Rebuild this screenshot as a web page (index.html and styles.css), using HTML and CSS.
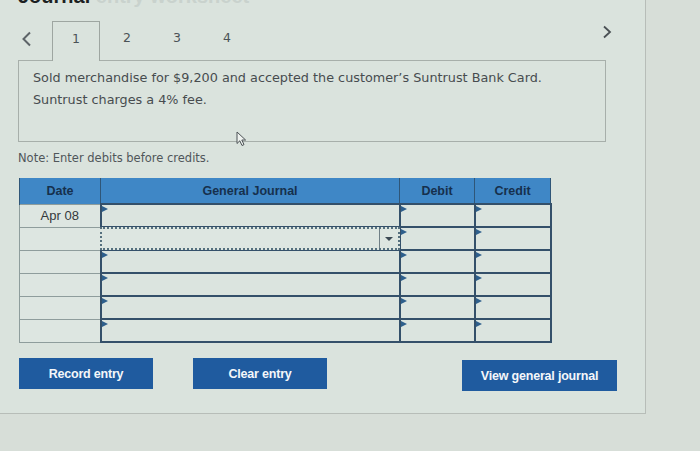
FILE: index.html
```html
<!DOCTYPE html>
<html>
<head>
<meta charset="utf-8">
<link rel="stylesheet" href="styles.css">
</head>
<body>
<div class="page">
  <div class="panel">
    <h1 class="title"><span class="t-strong">Journal</span> <span class="t-light">entry worksheet</span></h1>
    <div class="tabs">
      <span class="chev chev-left">
        <svg width="12" height="16" viewBox="0 0 12 16"><path d="M9 1.5 L2.5 8 L9 14.5" fill="none" stroke="#5d6468" stroke-width="2"/></svg>
      </span>
      <span class="tab active">1</span>
      <span class="tab">2</span>
      <span class="tab">3</span>
      <span class="tab">4</span>
      <span class="chev chev-right">
        <svg width="10" height="14" viewBox="0 0 10 14"><path d="M2 1.5 L8 7 L2 12.5" fill="none" stroke="#4a5054" stroke-width="1.8"/></svg>
      </span>
    </div>
    <div class="question">
      <p>Sold merchandise for $9,200 and accepted the customer’s Suntrust Bank Card.<br>Suntrust charges a 4% fee.</p>
    </div>
    <p class="note">Note: Enter debits before credits.</p>
    <table class="journal">
      <thead>
        <tr><th class="c-date">Date</th><th class="c-gj">General Journal</th><th class="c-dr">Debit</th><th class="c-cr">Credit</th></tr>
      </thead>
      <tbody>
        <tr><td class="date">Apr 08</td><td class="in"><i class="flag"></i></td><td class="in"><i class="flag"></i></td><td class="in"><i class="flag"></i></td></tr>
        <tr><td class="date"></td><td class="in"><span class="focus-ring"><span class="dd"><i class="caret"></i></span></span></td><td class="in"><i class="flag"></i></td><td class="in"><i class="flag"></i></td></tr>
        <tr><td class="date"></td><td class="in"><i class="flag"></i></td><td class="in"><i class="flag"></i></td><td class="in"><i class="flag"></i></td></tr>
        <tr><td class="date"></td><td class="in"><i class="flag"></i></td><td class="in"><i class="flag"></i></td><td class="in"><i class="flag"></i></td></tr>
        <tr><td class="date"></td><td class="in"><i class="flag"></i></td><td class="in"><i class="flag"></i></td><td class="in"><i class="flag"></i></td></tr>
        <tr><td class="date"></td><td class="in"><i class="flag"></i></td><td class="in"><i class="flag"></i></td><td class="in"><i class="flag"></i></td></tr>
      </tbody>
    </table>
    <div class="actions">
      <button class="btn btn-record">Record entry</button>
      <button class="btn btn-clear">Clear entry</button>
      <button class="btn btn-view">View general journal</button>
    </div>
    <svg class="cursor" width="12" height="16" viewBox="0 0 12 16"><path d="M1 1 L1 12.5 L3.8 9.8 L6 14.5 L8 13.6 L5.8 9 L9.6 9 Z" fill="#eef2ef" stroke="#4d5356" stroke-width="1"/></svg>
  </div>
</div>
</body>
</html>
```

FILE: styles.css
```css
html, body {
  margin: 0;
  padding: 0;
}
body {
  width: 700px;
  height: 451px;
  overflow: hidden;
  background: #d7ded8;
  font-family: "DejaVu Sans", Verdana, sans-serif;
}
.page {
  width: 700px;
  height: 451px;
}
.panel {
  display: flow-root;
  position: relative;
  width: 627px;
  height: 413px;
  padding-left: 18px;
  background: #dae3dd;
  border-right: 1px solid #b7bdb8;
  border-bottom: 1px solid #b7bdb8;
  box-sizing: content-box;
}
.title {
  margin: -14px 0 0 0;
  height: 20px;
  line-height: 20px;
  font-family: "Liberation Sans", Arial, sans-serif;
  font-size: 20px;
  font-weight: bold;
  white-space: nowrap;
}
.t-strong { color: #1c1f21; }
.t-light { color: #c9d2cd; }

.tabs {
  display: flex;
  align-items: stretch;
  margin-top: 15px;
  height: 39px;
  width: 588px;
  position: relative;
  z-index: 2;
}
.chev {
  display: flex;
  align-items: center;
}
.chev-left {
  width: 34px;
  padding-left: 3px;
  padding-bottom: 3px;
  box-sizing: border-box;
}
.chev-right {
  margin-left: auto;
  align-items: flex-start;
  padding-top: 4px;
  margin-right: -6px;
}
.tab {
  width: 50px;
  display: flex;
  justify-content: center;
  align-items: center;
  padding-bottom: 6px;
  box-sizing: border-box;
  font-size: 12.5px;
  color: #4b5256;
}
.tab.active {
  width: 48px;
  margin-right: 2px;
  border: 1px solid #9ea6a1;
  border-bottom: none;
  background: #dae3dd;
  height: 40px;
  margin-bottom: -1px;
  padding-bottom: 7px;
}
.question {
  width: 588px;
  height: 82px;
  box-sizing: border-box;
  border: 1px solid #a7afaa;
  padding: 6px 14px 0;
}
.question p {
  margin: 0;
  font-size: 12.8px;
  line-height: 22px;
  color: #474c4f;
  white-space: nowrap;
}
.note {
  margin: 8px 0 0 0;
  font-size: 11.5px;
  line-height: 16px;
  color: #50565a;
}
.journal {
  margin: 12px 0 0 1px;
  border-collapse: collapse;
  font-family: "Liberation Sans", Arial, sans-serif;
  table-layout: fixed;
}
.journal th {
  height: 25px;
  padding: 0;
  background: #3f87c6;
  color: #16304d;
  font-size: 12.5px;
  font-weight: bold;
  border-left: 1px solid #2f5678;
  border-right: 1px solid #2f5678;
}
.c-date { width: 80px; }
.c-gj { width: 298px; }
.c-dr { width: 74px; }
.c-cr { width: 75px; }
.journal td {
  height: 21px;
  padding: 0;
  position: relative;
}
.journal td.date {
  border: 1px solid #8e9d9c;
  border-right: 2px solid #34506a;
  text-align: center;
  font-size: 13px;
  color: #34393c;
  background: #dde6e1;
}
.journal td.in {
  border: 2px solid #34506a;
  background: #dbe4df;
}
.flag {
  position: absolute;
  left: 0;
  top: 1px;
  width: 0;
  height: 0;
  border-top: 3.5px solid transparent;
  border-bottom: 3.5px solid transparent;
  border-left: 6px solid #2e5f8c;
}
.focus-ring {
  position: absolute;
  left: -2px;
  right: -1px;
  top: -1px;
  bottom: -1px;
  border: 2px dotted #55707e;
  background: #dde6e1;
}
.dd {
  position: absolute;
  right: 0;
  top: 0;
  bottom: 0;
  width: 18px;
  border-left: 1px solid #6f7f86;
  display: flex;
  align-items: center;
  justify-content: center;
}
.caret {
  width: 0;
  height: 0;
  border-left: 4px solid transparent;
  border-right: 4px solid transparent;
  border-top: 4px solid #3c4a54;
}
.actions {
  display: flex;
  align-items: flex-start;
  margin-top: 15px;
  margin-left: 1px;
}
.btn {
  height: 31px;
  padding: 0;
  border: none;
  background: #1f5b9f;
  color: #f4f7fa;
  font-family: "Liberation Sans", Arial, sans-serif;
  font-size: 12.5px;
  font-weight: bold;
  letter-spacing: -0.2px;
}
.btn-record { width: 134px; }
.btn-clear { width: 134px; margin-left: 40px; }
.btn-view { width: 155px; margin-left: 135px; margin-top: 2px; }
.cursor {
  position: absolute;
  left: 236px;
  top: 131px;
}
```
